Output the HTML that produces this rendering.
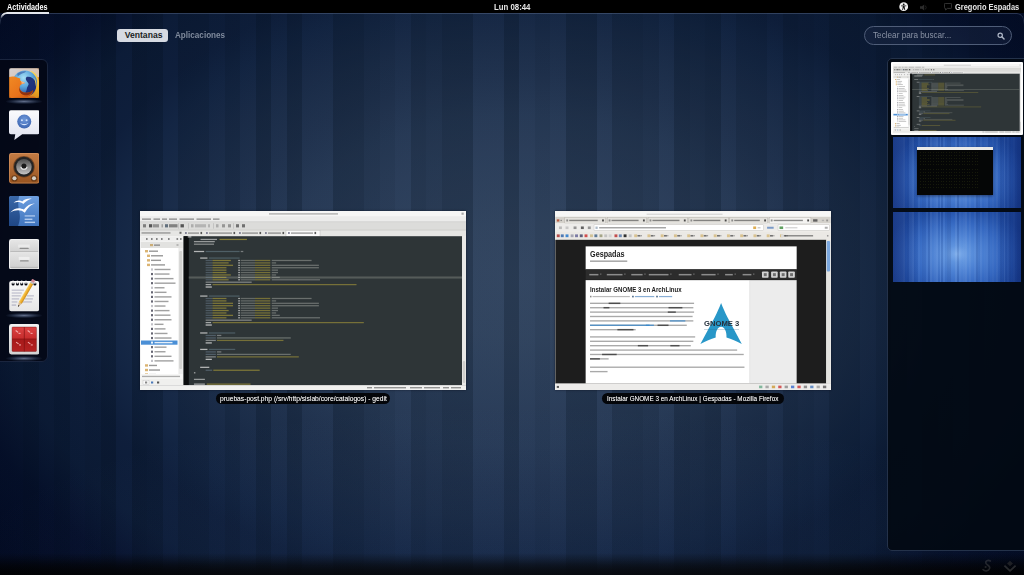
<!DOCTYPE html>
<html>
<head>
<meta charset="utf-8">
<title>GNOME Shell - Actividades</title>
<style>
*{box-sizing:border-box;margin:0;padding:0}
html,body{width:1024px;height:575px;overflow:hidden;background:#14254a;font-family:"Liberation Sans",sans-serif;}
.wt{position:absolute;font-weight:bold;white-space:nowrap;transform-origin:0 50%;}
#root{position:absolute;left:0;top:0;width:1024px;height:575px;overflow:hidden;background:#182a4e;}
.abs{position:absolute}
#bg1{left:0;top:0;width:1024px;height:575px;
 background:radial-gradient(ellipse 600px 414px at 520px 280px, rgb(54.4,73.9,101.7) 0%, rgb(52.0,71.5,99.2) 14%, rgb(46.0,65.5,94.4) 30%, rgb(41.1,60.6,89.5) 40%, rgb(33.9,52.1,81.1) 50%, rgb(29.0,47.3,76.2) 57%, rgb(19.4,37.6,67.8) 69%, rgb(14.5,30.4,59.3) 76%, rgb(12.1,27.9,55.7) 86%, rgb(5.4,15.8,43.6) 96%, rgb(3.0,11.0,37.5) 108%);}
#bg2{left:0;top:0;width:1024px;height:575px;background:linear-gradient(90deg, rgba(0,11,23,0.174) 0.00px, rgba(0,11,23,0.174) 7.75px, rgba(0,11,23,0.174) 7.75px, rgba(0,11,23,0.174) 23.25px, rgba(0,11,23,0.260) 23.25px, rgba(0,11,23,0.260) 38.75px, rgba(0,11,23,0.116) 38.75px, rgba(0,11,23,0.116) 54.25px, rgba(0,11,23,0.219) 54.25px, rgba(0,11,23,0.219) 69.75px, rgba(0,11,23,0.054) 69.75px, rgba(0,11,23,0.054) 85.25px, rgba(0,11,23,0.116) 85.25px, rgba(0,11,23,0.116) 100.75px, rgba(0,11,23,0.260) 100.75px, rgba(0,11,23,0.260) 116.25px, rgba(0,11,23,0.000) 116.25px, rgba(0,11,23,0.000) 131.75px, rgba(0,11,23,0.260) 131.75px, rgba(0,11,23,0.260) 147.25px, rgba(0,11,23,0.219) 147.25px, rgba(0,11,23,0.219) 162.75px, rgba(0,11,23,0.000) 162.75px, rgba(0,11,23,0.000) 178.25px, rgba(0,11,23,0.174) 178.25px, rgba(0,11,23,0.174) 193.75px, rgba(0,11,23,0.174) 193.75px, rgba(0,11,23,0.174) 209.25px, rgba(0,11,23,0.054) 209.25px, rgba(0,11,23,0.054) 224.75px, rgba(0,11,23,0.174) 224.75px, rgba(0,11,23,0.174) 240.25px, rgba(0,11,23,0.054) 240.25px, rgba(0,11,23,0.054) 255.75px, rgba(0,11,23,0.260) 255.75px, rgba(0,11,23,0.260) 271.25px, rgba(0,11,23,0.054) 271.25px, rgba(0,11,23,0.054) 286.75px, rgba(0,11,23,0.260) 286.75px, rgba(0,11,23,0.260) 302.25px, rgba(0,11,23,0.054) 302.25px, rgba(0,11,23,0.054) 317.75px, rgba(0,11,23,0.054) 317.75px, rgba(0,11,23,0.054) 333.25px, rgba(0,11,23,0.260) 333.25px, rgba(0,11,23,0.260) 348.75px, rgba(0,11,23,0.260) 348.75px, rgba(0,11,23,0.260) 364.25px, rgba(0,11,23,0.174) 364.25px, rgba(0,11,23,0.174) 379.75px, rgba(0,11,23,0.116) 379.75px, rgba(0,11,23,0.116) 395.25px, rgba(0,11,23,0.054) 395.25px, rgba(0,11,23,0.054) 410.75px, rgba(0,11,23,0.219) 410.75px, rgba(0,11,23,0.219) 426.25px, rgba(0,11,23,0.174) 426.25px, rgba(0,11,23,0.174) 441.75px, rgba(0,11,23,0.260) 441.75px, rgba(0,11,23,0.260) 457.25px, rgba(0,11,23,0.260) 457.25px, rgba(0,11,23,0.260) 472.75px, rgba(0,11,23,0.054) 472.75px, rgba(0,11,23,0.054) 488.25px, rgba(0,11,23,0.054) 488.25px, rgba(0,11,23,0.054) 503.75px, rgba(0,11,23,0.260) 503.75px, rgba(0,11,23,0.260) 519.25px, rgba(0,11,23,0.054) 519.25px, rgba(0,11,23,0.054) 534.75px, rgba(0,11,23,0.116) 534.75px, rgba(0,11,23,0.116) 550.25px, rgba(0,11,23,0.054) 550.25px, rgba(0,11,23,0.054) 565.75px, rgba(0,11,23,0.260) 565.75px, rgba(0,11,23,0.260) 581.25px, rgba(0,11,23,0.260) 581.25px, rgba(0,11,23,0.260) 596.75px, rgba(0,11,23,0.054) 596.75px, rgba(0,11,23,0.054) 612.25px, rgba(0,11,23,0.219) 612.25px, rgba(0,11,23,0.219) 627.75px, rgba(0,11,23,0.219) 627.75px, rgba(0,11,23,0.219) 643.25px, rgba(0,11,23,0.174) 643.25px, rgba(0,11,23,0.174) 658.75px, rgba(0,11,23,0.054) 658.75px, rgba(0,11,23,0.054) 674.25px, rgba(0,11,23,0.260) 674.25px, rgba(0,11,23,0.260) 689.75px, rgba(0,11,23,0.219) 689.75px, rgba(0,11,23,0.219) 705.25px, rgba(0,11,23,0.260) 705.25px, rgba(0,11,23,0.260) 720.75px, rgba(0,11,23,0.054) 720.75px, rgba(0,11,23,0.054) 736.25px, rgba(0,11,23,0.174) 736.25px, rgba(0,11,23,0.174) 751.75px, rgba(0,11,23,0.174) 751.75px, rgba(0,11,23,0.174) 767.25px, rgba(0,11,23,0.054) 767.25px, rgba(0,11,23,0.054) 782.75px, rgba(0,11,23,0.219) 782.75px, rgba(0,11,23,0.219) 798.25px, rgba(0,11,23,0.174) 798.25px, rgba(0,11,23,0.174) 813.75px, rgba(0,11,23,0.116) 813.75px, rgba(0,11,23,0.116) 829.25px, rgba(0,11,23,0.260) 829.25px, rgba(0,11,23,0.260) 844.75px, rgba(0,11,23,0.260) 844.75px, rgba(0,11,23,0.260) 860.25px, rgba(0,11,23,0.174) 860.25px, rgba(0,11,23,0.174) 875.75px, rgba(0,11,23,0.260) 875.75px, rgba(0,11,23,0.260) 891.25px, rgba(0,11,23,0.174) 891.25px, rgba(0,11,23,0.174) 906.75px, rgba(0,11,23,0.116) 906.75px, rgba(0,11,23,0.116) 922.25px, rgba(0,11,23,0.219) 922.25px, rgba(0,11,23,0.219) 937.75px, rgba(0,11,23,0.174) 937.75px, rgba(0,11,23,0.174) 953.25px, rgba(0,11,23,0.116) 953.25px, rgba(0,11,23,0.116) 968.75px, rgba(0,11,23,0.219) 968.75px, rgba(0,11,23,0.219) 984.25px, rgba(0,11,23,0.174) 984.25px, rgba(0,11,23,0.174) 999.75px, rgba(0,11,23,0.174) 999.75px, rgba(0,11,23,0.174) 1015.25px, rgba(0,11,23,0.174) 1015.25px, rgba(0,11,23,0.174) 1024.00px);}
#bg3{left:0;top:0;width:1024px;height:575px;
 background:radial-gradient(ellipse 560px 170px at 512px 575px, rgba(120,150,215,.062) 0%, rgba(120,150,215,.052) 40%, rgba(120,150,215,.03) 65%, rgba(120,150,215,0) 100%),linear-gradient(180deg, rgba(0,0,0,0) 0px, rgba(0,0,0,0) 553px, rgba(0,0,0,.3) 559px, rgba(0,0,0,.66) 565px, rgba(0,0,0,.86) 570px, rgba(0,0,0,.94) 575px);}
/* top bar */
#topbar{left:0;top:0;width:1024px;height:12.5px;background:#000;color:#e6e6e6;font-weight:bold;font-size:8.2px;line-height:15.6px;}
#topbar span{position:absolute;top:0;white-space:nowrap;transform-origin:0 50%;}
#cornerline{left:0;top:13px;width:1024px;height:12px;border-top:1px solid rgba(120,136,170,.34);border-left:1px solid rgba(150,165,190,.45);border-right:1px solid rgba(150,165,190,.25);border-radius:7px 7px 0 0;border-bottom:none;
 -webkit-mask-image:linear-gradient(180deg,#000 0,#000 3px,transparent 12px);}
/* view selector */
#ventanas{left:117px;top:29px;width:51px;height:13px;border-radius:3px;background:#d6dae2;color:#1a1d24;font-weight:bold;font-size:8.6px;line-height:13.5px;text-align:center;}
#aplic{left:175px;top:29px;height:13px;color:#7f8a9c;font-weight:bold;font-size:8.6px;line-height:13.5px;transform:scaleX(.945);transform-origin:0 50%;white-space:nowrap;}
#search{left:864.4px;top:26.4px;width:148px;height:19px;border-radius:10px;border:1px solid #4f5d78;background:rgba(36,50,80,.32);color:#8a93a5;font-size:9px;line-height:17.5px;padding-left:7.6px;white-space:nowrap;}
#search span{display:inline-block;transform:scaleX(.909);transform-origin:0 50%;}
/* dash */
#dash{left:-2px;top:59.2px;width:50.2px;height:302.6px;border:1px solid #1a253e;border-radius:0 6px 6px 0;background:rgba(3,7,20,.88);}
.ico{position:absolute;left:9px;width:30px;height:30px;border-radius:4px;}
.glow{position:absolute;left:6px;width:36px;height:5px;background:radial-gradient(ellipse at center, rgba(170,190,230,.55) 0%, rgba(120,150,200,.18) 50%, rgba(0,0,0,0) 75%);}
/* windows */
.win{position:absolute;background:#fff;overflow:hidden;box-shadow:0 0 2px rgba(0,4,16,.55);}
.cap{position:absolute;height:11.4px;border-radius:5.7px;background:#04060a;color:#ececec;font-size:7.2px;line-height:11.6px;white-space:nowrap;text-shadow:0 0 .6px rgba(255,255,255,.55);}
.cap span{position:absolute;left:0;top:0;transform-origin:0 50%;}
/* workspaces panel */
#wsp{left:887px;top:58px;width:141px;height:492.5px;border:1px solid #24324a;border-radius:5px 0 0 5px;background:rgba(2,9,18,.89);}
.ws{position:absolute;left:892px;width:132px;overflow:hidden;}
</style>
</head>
<body>
<div id="root">
 <div id="bg1" class="abs"></div>
 <div id="bg2" class="abs"></div>
 <div id="bg3" class="abs"></div>

 <div id="topbar" class="abs">
  <span style="left:6.8px;transform:scaleX(.882);color:#fff">Actividades</span>

  <span style="left:493.9px;transform:scaleX(.953)">Lun 08:44</span>
  <svg class="abs" style="left:898.5px;top:2.2px" width="9.4" height="9.4" viewBox="0 0 10 10"><circle cx="5" cy="5" r="4.7" fill="#f0f0f0"/><circle cx="5" cy="2.5" r="1" fill="#111"/><path d="M2.2,3.8 H7.8 V4.6 H5.9 L6.6,8.4 H5.8 L5,6 L4.2,8.4 H3.4 L4.1,4.6 H2.2Z" fill="#111"/></svg>
  <svg class="abs" style="left:920px;top:3.6px" width="9" height="7" viewBox="0 0 9 7"><path d="M0,2.2 H2 L4.2,0.4 V6.6 L2,4.8 H0Z" fill="#2c2c2c"/><path d="M5.4,1.6 Q7,3.5 5.4,5.4" stroke="#262626" stroke-width=".9" fill="none"/></svg>
  <svg class="abs" style="left:944px;top:3.4px" width="8" height="7.4" viewBox="0 0 8 7.4"><path d="M1.2,.4 H6.8 Q7.6,.4 7.6,1.2 V4.6 Q7.6,5.4 6.8,5.4 H3.4 L1.6,7 V5.4 H1.2 Q.4,5.4 .4,4.6 V1.2 Q.4,.4 1.2,.4Z" fill="none" stroke="#3c3c3c" stroke-width=".9"/></svg>
  <span style="left:955px;transform:scaleX(.910)">Gregorio Espadas</span>
 </div>
 <div id="cornerline" class="abs"></div>
 <div class="abs" style="left:0;top:12px;width:49px;height:8px;border-top:2px solid #e4e7ec;border-left:2px solid #e4e7ec;border-top-left-radius:7px;-webkit-mask-image:linear-gradient(180deg,#000 0,#000 2px,transparent 6.5px);"></div>

 <div id="ventanas" class="abs"><span style="display:inline-block;transform:scaleX(1.003) translateX(.7px)">Ventanas</span></div>
 <div id="aplic" class="abs">Aplicaciones</div>
 <div id="search" class="abs"><span>Teclear para buscar...</span>
  <svg class="abs" style="left:131.8px;top:5px" width="8" height="8" viewBox="0 0 10 10"><circle cx="4" cy="4" r="2.7" fill="none" stroke="#aeb6c6" stroke-width="1.5"/><path d="M6,6 L8.8,8.8" stroke="#aeb6c6" stroke-width="1.8" stroke-linecap="round"/></svg></div>

 <div id="dash" class="abs"></div>
 <svg class="abs" style="left:8.5px;top:67.5px" width="30.5" height="30.5" viewBox="0 0 30 30.00">
<defs>
<linearGradient id="ffbg" x1="0" y1="0" x2="1" y2="1"><stop offset="0" stop-color="#dcd6d2"/><stop offset=".3" stop-color="#e9a05a"/><stop offset=".6" stop-color="#e8801f"/><stop offset="1" stop-color="#d89a2a"/></linearGradient>
<radialGradient id="ffgl" cx=".45" cy=".3" r=".75"><stop offset="0" stop-color="#a6e0f6"/><stop offset=".5" stop-color="#5aa6dc"/><stop offset="1" stop-color="#24479c"/></radialGradient>
<linearGradient id="fftail" x1="0" y1="0" x2="0" y2="1"><stop offset="0" stop-color="#f6d860"/><stop offset=".6" stop-color="#f0b428"/><stop offset="1" stop-color="#d88a1c"/></linearGradient>
<linearGradient id="fffox" x1="0" y1="0" x2="1" y2="1"><stop offset="0" stop-color="#f08a24"/><stop offset=".6" stop-color="#e8711a"/><stop offset="1" stop-color="#b8440e"/></linearGradient>
<clipPath id="ffclip"><rect x="0" y="0" width="30" height="30" rx="2.6"/></clipPath>
</defs>
<g clip-path="url(#ffclip)">
<rect width="30" height="30" fill="url(#ffbg)"/>
<rect x="0" y="0" width="30" height="9" fill="#d4d2d4" opacity=".8"/>
<path d="M21,3 C28,4 31,12 30.5,30 L22,30 C29,22 28,10 21,3Z" fill="url(#fftail)"/>
<circle cx="15.6" cy="14.4" r="12" fill="url(#ffgl)"/>
<path d="M17.6,8.6 C21,8 24.4,10 26,13.4 C27.8,17.6 26.4,23.6 22,26.4 C18,28.6 14.6,26.6 16.4,23.6 C18,21.4 17,19.6 18.6,17.6 C20.4,15.6 18.4,14.4 17.2,12.6 C16.2,11 16.4,9.2 17.6,8.6Z" fill="#1a2a74" opacity=".92"/>
<path d="M8,5.6 C10.4,3.6 14,2.8 17,3.4 C14.6,5.2 11.4,5.6 8.6,8Z" fill="#2b4c9a" opacity=".55"/>
<path d="M24.6,9 C27,12 27.6,16 26.8,19.6 C26,15.6 25.6,12 24.6,9Z" fill="#f4d050" opacity=".9"/>
<path d="M0,8.8 C3,7.8 6.4,8.2 8.6,9.6 L11.2,10.4 C10.6,11.6 11,12.4 12,13 C13.4,13.4 14.8,13.9 15.8,14.8 C14,15.5 12,15.7 11,17.2 C9.6,19.6 11,22.6 14,23.8 C17,24.8 21,24.2 23.8,21.6 C23.4,26 19.6,29 14,29.6 L14,31 L0,31Z" fill="url(#fffox)"/>
<path d="M11,17.2 C9.6,19.6 11,22.6 14,23.8 C17,24.8 21,24.2 23.8,21.6 C22.6,25.8 18.4,27.4 14.6,26.6 C10.6,25.6 8.8,21.4 11,17.2Z" fill="#7e240c" opacity=".8"/>
<path d="M11.4,12.6 C13,13.2 14.8,13.9 15.8,14.8 C14.6,15.2 13.4,15.3 12.4,15.8 C12.6,14.6 12.2,13.6 11.4,12.6Z" fill="#f8c8a0" opacity=".8"/>
<path d="M2,30.5 C6,27.6 10,29 14,29 C20,28.6 25,26.6 28,30.5Z" fill="#c8641a"/>
<rect x="0" y="0" width="30" height="30" rx="2.6" fill="none" stroke="#3a2412" stroke-opacity=".5" stroke-width=".8"/>
</g></svg><svg class="abs" style="left:8.5px;top:110.4px" width="30.5" height="30.5" viewBox="0 0 30 30.00">
<defs><linearGradient id="embg" x1="0" y1="0" x2="0" y2="1"><stop offset="0" stop-color="#fbfbfd"/><stop offset="1" stop-color="#dfe2ef"/></linearGradient>
<radialGradient id="emsm" cx=".5" cy=".35" r=".7"><stop offset="0" stop-color="#6d97da"/><stop offset="1" stop-color="#3a62ae"/></radialGradient></defs>
<path d="M1.8,0.2 H28.2 Q30,0.2 30,2 V22 Q30,23.9 28.2,23.9 H13 L5.2,29.4 L6.2,23.9 H1.8 Q0,23.9 0,22 V2 Q0,0.2 1.8,0.2Z" fill="url(#embg)"/>
<circle cx="15" cy="11.4" r="6.9" fill="url(#emsm)"/>
<circle cx="12.7" cy="10.1" r="1" fill="#cfe0fa"/><circle cx="17.3" cy="10.1" r="1" fill="#cfe0fa"/>
<path d="M10.8,12.6 C12.4,15.8 17.6,15.8 19.2,12.6 C17.6,14.2 12.4,14.2 10.8,12.6Z" fill="#d6e4fb"/>
</svg><svg class="abs" style="left:8.5px;top:153.0px" width="30.5" height="30.5" viewBox="0 0 30 30.00">
<defs><linearGradient id="rbbg" x1="0" y1="0" x2="0" y2="1"><stop offset="0" stop-color="#c47c44"/><stop offset=".5" stop-color="#b06a34"/><stop offset="1" stop-color="#96531f"/></linearGradient>
<linearGradient id="rbcone" x1="0" y1="0" x2="0" y2="1"><stop offset="0" stop-color="#4c4c4c"/><stop offset=".5" stop-color="#8a8a8a"/><stop offset="1" stop-color="#c4c4c4"/></linearGradient><radialGradient id="rbsp" cx=".5" cy=".42" r=".6"><stop offset="0" stop-color="#161616"/><stop offset=".14" stop-color="#222"/><stop offset=".2" stop-color="#d8d8d8"/><stop offset=".45" stop-color="#8e8e8e"/><stop offset=".62" stop-color="#555"/><stop offset=".78" stop-color="#2a2a2a"/><stop offset="1" stop-color="#1a1a1a"/></radialGradient></defs>
<rect width="30" height="30" rx="2.4" fill="url(#rbbg)"/>
<rect x=".5" y=".5" width="29" height="29" rx="2.2" fill="none" stroke="#e0a070" stroke-opacity=".6" stroke-width=".8"/>
<circle cx="14.7" cy="13.5" r="10.6" fill="#3a2010" opacity=".5"/>
<circle cx="14.7" cy="13.5" r="9.8" fill="#242424"/>
<circle cx="14.7" cy="13.5" r="7.6" fill="url(#rbcone)"/>
<circle cx="14.7" cy="12.9" r="2.5" fill="#1a1a1a"/>
<path d="M11.6,13.6 A3.2,3.2 0 0 0 17.8,13.6" fill="none" stroke="#f4f4f4" stroke-width="1.1" opacity=".85"/>
<circle cx="5.4" cy="25" r="3.1" fill="#6a3c18"/><circle cx="5.4" cy="24.8" r="2" fill="#d4cec4"/>
<circle cx="24.6" cy="25" r="3.1" fill="#6a3c18"/><circle cx="24.6" cy="24.8" r="2" fill="#d4cec4"/>
</svg><svg class="abs" style="left:8.5px;top:195.8px" width="30.5" height="30.5" viewBox="0 0 30 30.00">
<defs><linearGradient id="oobg" x1="0" y1="0" x2="0" y2="1"><stop offset="0" stop-color="#6d9fe0"/><stop offset="1" stop-color="#3f74bd"/></linearGradient>
<linearGradient id="oolf" x1="0" y1="0" x2="0" y2="1"><stop offset="0" stop-color="#3a68a8"/><stop offset="1" stop-color="#1f4684"/></linearGradient>
<clipPath id="ooclip"><rect width="30" height="30" rx="2.4"/></clipPath></defs>
<g clip-path="url(#ooclip)">
<rect width="30" height="30" fill="url(#oobg)"/>
<path d="M0,0 H10 C8.6,6 9,11 10,15 C11.4,20 10.6,25 8.8,30 H0Z" fill="url(#oolf)"/>
<path d="M4.6,6.6 C7,4.4 10.4,3.8 13,5.4 C15.6,2.8 19,2.2 22.4,2.6 C19,3.4 16.4,5 14,7.8 C11.6,5.8 8,5.6 4.6,6.6Z" fill="#fdfdff"/>
<path d="M1.2,16.2 C5,11.6 10.4,10.8 14.6,13.4 C17.6,9.2 21.6,7.2 25.4,7.4 C21.2,8.8 18.2,11.8 15.6,16.4 C12,13 6,13.2 1.2,16.2Z" fill="#fdfdff"/>
<rect x="15.4" y="19" width="10.2" height="1.2" fill="#c4d8f4" opacity=".85"/>
<rect x="15.4" y="22.2" width="7.6" height="1.4" fill="#c4d8f4" opacity=".85"/>
<rect x="15.4" y="25.2" width="10.2" height="1.4" fill="#c4d8f4" opacity=".85"/>
</g></svg><svg class="abs" style="left:8.5px;top:238.6px" width="30.5" height="30.5" viewBox="0 0 30 30.00">
<defs><linearGradient id="fmbg" x1="0" y1="0" x2="0" y2="1"><stop offset="0" stop-color="#e6e6e6"/><stop offset=".42" stop-color="#d2d2d2"/><stop offset=".44" stop-color="#e4e4e4"/><stop offset="1" stop-color="#cfcfcf"/></linearGradient></defs>
<rect width="30" height="30" rx="2.4" fill="#f2f2f2"/>
<rect x="1" y="1" width="28" height="28" rx="1.8" fill="url(#fmbg)"/>
<rect x="1.4" y="12.3" width="27.2" height=".8" fill="#a2a2a2"/>
<rect x="1.4" y="13.1" width="27.2" height=".6" fill="#f4f4f4"/>
<rect x="9" y="5.4" width="11.4" height="3" fill="#eaeaea"/>
<rect x="10.4" y="8.6" width="9" height="1.3" rx=".6" fill="#8e8e8e"/>
<rect x="9.6" y="17.6" width="10.6" height="3" fill="#eeeeee"/>
<rect x="10.8" y="20.9" width="8.6" height="1.3" rx=".6" fill="#8e8e8e"/>
<rect x="1.4" y="27.4" width="27.2" height="1.2" fill="#b4b4b4" opacity=".8"/>
</svg><svg class="abs" style="left:8.5px;top:279.0px" width="30.5" height="32.5" viewBox="0 0 30 32.00">
<defs><linearGradient id="gebg" x1="0" y1="0" x2="0" y2="1"><stop offset="0" stop-color="#fafafa"/><stop offset="1" stop-color="#e6e6e6"/></linearGradient>
<linearGradient id="gepen" x1="0" y1="0" x2="1" y2="0"><stop offset="0" stop-color="#f8d060"/><stop offset=".5" stop-color="#f0b030"/><stop offset="1" stop-color="#c88a1a"/></linearGradient></defs>
<rect x="0.2" y="2" width="29.4" height="29.8" rx="2" fill="url(#gebg)"/>
<g fill="#0a0c14"><circle cx="4" cy="4.8" r="1.5"/><circle cx="8.3" cy="4.8" r="1.5"/><circle cx="12.5" cy="4.8" r="1.5"/><circle cx="16.7" cy="4.8" r="1.5"/><circle cx="25.5" cy="4.8" r="1.5"/></g>
<g fill="#fafafa"><rect x="3.3" y="1.6" width="1.4" height="3"/><rect x="7.6" y="1.6" width="1.4" height="3"/><rect x="11.8" y="1.6" width="1.4" height="3"/><rect x="16" y="1.6" width="1.4" height="3"/><rect x="24.8" y="1.6" width="1.4" height="3"/></g>
<g fill="#8c8ca8" opacity=".5"><rect x="2.6" y="10.4" width="12" height="1.2"/><rect x="2.6" y="13.2" width="10" height="1.2"/><rect x="2.6" y="16" width="9" height="1.2"/><rect x="2.6" y="19" width="7.4" height="1.2"/><rect x="2.6" y="22" width="5.6" height="1.2"/><rect x="2.6" y="25" width="4.4" height="1.4"/>
<rect x="17.5" y="16" width="7" height="1.2"/><rect x="15.5" y="19" width="8" height="1.2"/><rect x="13.5" y="22" width="9" height="1.2"/></g>
<g transform="translate(8.8,27.6) rotate(30)">
<path d="M0,0 L-1.7,-4.6 H1.7Z" fill="#d8b890"/><path d="M0,0 L-.7,-1.9 H.7Z" fill="#222"/>
<rect x="-1.7" y="-27" width="3.4" height="22.4" fill="url(#gepen)"/>
<rect x="-1.7" y="-28.4" width="3.4" height="1.6" fill="#b8b8b8"/>
<rect x="-1.7" y="-31.2" width="3.4" height="2.9" rx="1" fill="#d48a98"/>
</g></svg><svg class="abs" style="left:8.5px;top:324.0px" width="30.5" height="30.5" viewBox="0 0 30 30.00">
<defs><linearGradient id="tmfr" x1="0" y1="0" x2="0" y2="1"><stop offset="0" stop-color="#f2f2f2"/><stop offset="1" stop-color="#d2d2d2"/></linearGradient>
<linearGradient id="tmrd" x1="0" y1="0" x2="0" y2="1"><stop offset="0" stop-color="#dc4444"/><stop offset=".48" stop-color="#c62c2c"/><stop offset=".52" stop-color="#a81a1a"/><stop offset="1" stop-color="#b42222"/></linearGradient></defs>
<rect width="30" height="30" rx="2.4" fill="url(#tmfr)"/>
<rect x="3" y="3" width="24" height="24" rx=".8" fill="url(#tmrd)"/>
<rect x="3" y="3" width="24" height="24" rx=".8" fill="none" stroke="#6a0c0c" stroke-opacity=".55" stroke-width=".7"/>
<rect x="14.6" y="3" width=".8" height="24" fill="#7a1010" opacity=".8"/>
<rect x="3" y="14.4" width="24" height=".8" fill="#7a1010" opacity=".8"/>
<g stroke="#ffc8c8" stroke-width="1" fill="none" opacity=".85"><path d="M6.6,6.4 L9,8.2"/><path d="M9.4,9.2 H11.4"/><path d="M18.4,6.4 L20.8,8.2"/><path d="M21.2,9.2 H23.2"/>
<path d="M7,17.8 L9.4,19.6"/><path d="M9.8,20.6 H11.8"/><path d="M18.6,17.8 L21,19.6"/><path d="M21.4,20.6 H23.4"/></g>
</svg><div class="glow" style="top:99.3px"></div><div class="glow" style="top:312.6px"></div><div class="glow" style="top:355.6px"></div>

 <div id="wsp" class="abs"></div>
 <div class="abs" style="left:891px;top:61.6px;width:132.4px;height:73.8px;background:#fdfdfd;border-radius:1px;"></div><div class="abs" style="left:893px;top:63.6px;width:128.4px;height:69.8px;background:#111;overflow:hidden;"><svg class="abs" style="left:0;top:.9px" width="128.4" height="68.9" viewBox="0 0 326 179" preserveAspectRatio="none"><use href="#g1"/></svg></div><div class="abs" style="left:893px;top:137.4px;width:128px;height:71px;background:linear-gradient(90deg, rgba(8,28,100,.42) 0, rgba(8,28,100,0) 20%, rgba(8,28,100,0) 80%, rgba(8,28,100,.42) 100%), linear-gradient(90deg,rgba(255,255,255,0.044) 0.00px, rgba(255,255,255,0.044) 1.94px,rgba(255,255,255,0.044) 1.94px, rgba(255,255,255,0.044) 3.88px,rgba(255,255,255,0.044) 3.88px, rgba(255,255,255,0.044) 5.82px,rgba(255,255,255,0.044) 5.82px, rgba(255,255,255,0.044) 7.76px,rgba(255,255,255,0.044) 7.76px, rgba(255,255,255,0.044) 9.70px,rgba(255,255,255,0.066) 9.70px, rgba(255,255,255,0.066) 11.64px,rgba(255,255,255,0.000) 11.64px, rgba(255,255,255,0.000) 13.58px,rgba(0,10,60,0.050) 13.58px, rgba(0,10,60,0.050) 15.52px,rgba(255,255,255,0.044) 15.52px, rgba(255,255,255,0.044) 17.45px,rgba(255,255,255,0.044) 17.45px, rgba(255,255,255,0.044) 19.39px,rgba(255,255,255,0.066) 19.39px, rgba(255,255,255,0.066) 21.33px,rgba(0,10,60,0.050) 21.33px, rgba(0,10,60,0.050) 23.27px,rgba(0,10,60,0.050) 23.27px, rgba(0,10,60,0.050) 25.21px,rgba(255,255,255,0.044) 25.21px, rgba(255,255,255,0.044) 27.15px,rgba(255,255,255,0.000) 27.15px, rgba(255,255,255,0.000) 29.09px,rgba(0,10,60,0.050) 29.09px, rgba(0,10,60,0.050) 31.03px,rgba(0,10,60,0.050) 31.03px, rgba(0,10,60,0.050) 32.97px,rgba(255,255,255,0.044) 32.97px, rgba(255,255,255,0.044) 34.91px,rgba(0,10,60,0.100) 34.91px, rgba(0,10,60,0.100) 36.85px,rgba(255,255,255,0.066) 36.85px, rgba(255,255,255,0.066) 38.79px,rgba(255,255,255,0.022) 38.79px, rgba(255,255,255,0.022) 40.73px,rgba(255,255,255,0.044) 40.73px, rgba(255,255,255,0.044) 42.67px,rgba(255,255,255,0.066) 42.67px, rgba(255,255,255,0.066) 44.61px,rgba(0,10,60,0.050) 44.61px, rgba(0,10,60,0.050) 46.55px,rgba(255,255,255,0.066) 46.55px, rgba(255,255,255,0.066) 48.48px,rgba(0,10,60,0.100) 48.48px, rgba(0,10,60,0.100) 50.42px,rgba(255,255,255,0.044) 50.42px, rgba(255,255,255,0.044) 52.36px,rgba(0,10,60,0.050) 52.36px, rgba(0,10,60,0.050) 54.30px,rgba(0,10,60,0.100) 54.30px, rgba(0,10,60,0.100) 56.24px,rgba(0,10,60,0.100) 56.24px, rgba(0,10,60,0.100) 58.18px,rgba(255,255,255,0.000) 58.18px, rgba(255,255,255,0.000) 60.12px,rgba(255,255,255,0.000) 60.12px, rgba(255,255,255,0.000) 62.06px,rgba(255,255,255,0.066) 62.06px, rgba(255,255,255,0.066) 64.00px,rgba(0,10,60,0.100) 64.00px, rgba(0,10,60,0.100) 65.94px,rgba(255,255,255,0.044) 65.94px, rgba(255,255,255,0.044) 67.88px,rgba(255,255,255,0.022) 67.88px, rgba(255,255,255,0.022) 69.82px,rgba(255,255,255,0.044) 69.82px, rgba(255,255,255,0.044) 71.76px,rgba(255,255,255,0.066) 71.76px, rgba(255,255,255,0.066) 73.70px,rgba(255,255,255,0.000) 73.70px, rgba(255,255,255,0.000) 75.64px,rgba(255,255,255,0.044) 75.64px, rgba(255,255,255,0.044) 77.58px,rgba(255,255,255,0.000) 77.58px, rgba(255,255,255,0.000) 79.52px,rgba(255,255,255,0.000) 79.52px, rgba(255,255,255,0.000) 81.45px,rgba(255,255,255,0.044) 81.45px, rgba(255,255,255,0.044) 83.39px,rgba(0,10,60,0.100) 83.39px, rgba(0,10,60,0.100) 85.33px,rgba(0,10,60,0.050) 85.33px, rgba(0,10,60,0.050) 87.27px,rgba(255,255,255,0.044) 87.27px, rgba(255,255,255,0.044) 89.21px,rgba(255,255,255,0.000) 89.21px, rgba(255,255,255,0.000) 91.15px,rgba(255,255,255,0.022) 91.15px, rgba(255,255,255,0.022) 93.09px,rgba(255,255,255,0.044) 93.09px, rgba(255,255,255,0.044) 95.03px,rgba(0,10,60,0.050) 95.03px, rgba(0,10,60,0.050) 96.97px,rgba(255,255,255,0.000) 96.97px, rgba(255,255,255,0.000) 98.91px,rgba(255,255,255,0.022) 98.91px, rgba(255,255,255,0.022) 100.85px,rgba(255,255,255,0.000) 100.85px, rgba(255,255,255,0.000) 102.79px,rgba(255,255,255,0.044) 102.79px, rgba(255,255,255,0.044) 104.73px,rgba(255,255,255,0.000) 104.73px, rgba(255,255,255,0.000) 106.67px,rgba(0,10,60,0.100) 106.67px, rgba(0,10,60,0.100) 108.61px,rgba(0,10,60,0.050) 108.61px, rgba(0,10,60,0.050) 110.55px,rgba(255,255,255,0.066) 110.55px, rgba(255,255,255,0.066) 112.48px,rgba(0,10,60,0.050) 112.48px, rgba(0,10,60,0.050) 114.42px,rgba(255,255,255,0.022) 114.42px, rgba(255,255,255,0.022) 116.36px,rgba(0,10,60,0.050) 116.36px, rgba(0,10,60,0.050) 118.30px,rgba(255,255,255,0.000) 118.30px, rgba(255,255,255,0.000) 120.24px,rgba(255,255,255,0.022) 120.24px, rgba(255,255,255,0.022) 122.18px,rgba(0,10,60,0.050) 122.18px, rgba(0,10,60,0.050) 124.12px,rgba(0,10,60,0.100) 124.12px, rgba(0,10,60,0.100) 126.06px,rgba(0,10,60,0.100) 126.06px, rgba(0,10,60,0.100) 128.00px), radial-gradient(ellipse 70px 52px at 64px 42px, #7caceb 0%, #5e93de 16%, #4a7fd2 36%, #3467c0 62%, #2553aa 85%, #1f4a9e 100%);"></div><div class="abs" style="left:917.2px;top:147.2px;width:75.4px;height:47.4px;background:#050606;box-shadow:0 1px 3px rgba(0,0,20,.5)"><div class="abs" style="left:0;top:0;width:75.4px;height:2.6px;background:#e9e9e8"></div><div class="abs" style="left:3px;top:5px;width:58px;height:38px;opacity:.3;background:repeating-linear-gradient(90deg, rgba(5,6,6,0) 0 1px, rgba(5,6,6,1) 1px 2.6px), repeating-linear-gradient(180deg, rgba(110,120,40,.55) 0 .9px, rgba(5,6,6,1) .9px 2.9px);"></div></div><div class="abs" style="left:893px;top:212px;width:128px;height:70px;background:linear-gradient(90deg, rgba(8,28,100,.42) 0, rgba(8,28,100,0) 20%, rgba(8,28,100,0) 80%, rgba(8,28,100,.42) 100%), linear-gradient(90deg,rgba(255,255,255,0.044) 0.00px, rgba(255,255,255,0.044) 1.94px,rgba(255,255,255,0.044) 1.94px, rgba(255,255,255,0.044) 3.88px,rgba(255,255,255,0.044) 3.88px, rgba(255,255,255,0.044) 5.82px,rgba(255,255,255,0.044) 5.82px, rgba(255,255,255,0.044) 7.76px,rgba(255,255,255,0.044) 7.76px, rgba(255,255,255,0.044) 9.70px,rgba(255,255,255,0.066) 9.70px, rgba(255,255,255,0.066) 11.64px,rgba(255,255,255,0.000) 11.64px, rgba(255,255,255,0.000) 13.58px,rgba(0,10,60,0.050) 13.58px, rgba(0,10,60,0.050) 15.52px,rgba(255,255,255,0.044) 15.52px, rgba(255,255,255,0.044) 17.45px,rgba(255,255,255,0.044) 17.45px, rgba(255,255,255,0.044) 19.39px,rgba(255,255,255,0.066) 19.39px, rgba(255,255,255,0.066) 21.33px,rgba(0,10,60,0.050) 21.33px, rgba(0,10,60,0.050) 23.27px,rgba(0,10,60,0.050) 23.27px, rgba(0,10,60,0.050) 25.21px,rgba(255,255,255,0.044) 25.21px, rgba(255,255,255,0.044) 27.15px,rgba(255,255,255,0.000) 27.15px, rgba(255,255,255,0.000) 29.09px,rgba(0,10,60,0.050) 29.09px, rgba(0,10,60,0.050) 31.03px,rgba(0,10,60,0.050) 31.03px, rgba(0,10,60,0.050) 32.97px,rgba(255,255,255,0.044) 32.97px, rgba(255,255,255,0.044) 34.91px,rgba(0,10,60,0.100) 34.91px, rgba(0,10,60,0.100) 36.85px,rgba(255,255,255,0.066) 36.85px, rgba(255,255,255,0.066) 38.79px,rgba(255,255,255,0.022) 38.79px, rgba(255,255,255,0.022) 40.73px,rgba(255,255,255,0.044) 40.73px, rgba(255,255,255,0.044) 42.67px,rgba(255,255,255,0.066) 42.67px, rgba(255,255,255,0.066) 44.61px,rgba(0,10,60,0.050) 44.61px, rgba(0,10,60,0.050) 46.55px,rgba(255,255,255,0.066) 46.55px, rgba(255,255,255,0.066) 48.48px,rgba(0,10,60,0.100) 48.48px, rgba(0,10,60,0.100) 50.42px,rgba(255,255,255,0.044) 50.42px, rgba(255,255,255,0.044) 52.36px,rgba(0,10,60,0.050) 52.36px, rgba(0,10,60,0.050) 54.30px,rgba(0,10,60,0.100) 54.30px, rgba(0,10,60,0.100) 56.24px,rgba(0,10,60,0.100) 56.24px, rgba(0,10,60,0.100) 58.18px,rgba(255,255,255,0.000) 58.18px, rgba(255,255,255,0.000) 60.12px,rgba(255,255,255,0.000) 60.12px, rgba(255,255,255,0.000) 62.06px,rgba(255,255,255,0.066) 62.06px, rgba(255,255,255,0.066) 64.00px,rgba(0,10,60,0.100) 64.00px, rgba(0,10,60,0.100) 65.94px,rgba(255,255,255,0.044) 65.94px, rgba(255,255,255,0.044) 67.88px,rgba(255,255,255,0.022) 67.88px, rgba(255,255,255,0.022) 69.82px,rgba(255,255,255,0.044) 69.82px, rgba(255,255,255,0.044) 71.76px,rgba(255,255,255,0.066) 71.76px, rgba(255,255,255,0.066) 73.70px,rgba(255,255,255,0.000) 73.70px, rgba(255,255,255,0.000) 75.64px,rgba(255,255,255,0.044) 75.64px, rgba(255,255,255,0.044) 77.58px,rgba(255,255,255,0.000) 77.58px, rgba(255,255,255,0.000) 79.52px,rgba(255,255,255,0.000) 79.52px, rgba(255,255,255,0.000) 81.45px,rgba(255,255,255,0.044) 81.45px, rgba(255,255,255,0.044) 83.39px,rgba(0,10,60,0.100) 83.39px, rgba(0,10,60,0.100) 85.33px,rgba(0,10,60,0.050) 85.33px, rgba(0,10,60,0.050) 87.27px,rgba(255,255,255,0.044) 87.27px, rgba(255,255,255,0.044) 89.21px,rgba(255,255,255,0.000) 89.21px, rgba(255,255,255,0.000) 91.15px,rgba(255,255,255,0.022) 91.15px, rgba(255,255,255,0.022) 93.09px,rgba(255,255,255,0.044) 93.09px, rgba(255,255,255,0.044) 95.03px,rgba(0,10,60,0.050) 95.03px, rgba(0,10,60,0.050) 96.97px,rgba(255,255,255,0.000) 96.97px, rgba(255,255,255,0.000) 98.91px,rgba(255,255,255,0.022) 98.91px, rgba(255,255,255,0.022) 100.85px,rgba(255,255,255,0.000) 100.85px, rgba(255,255,255,0.000) 102.79px,rgba(255,255,255,0.044) 102.79px, rgba(255,255,255,0.044) 104.73px,rgba(255,255,255,0.000) 104.73px, rgba(255,255,255,0.000) 106.67px,rgba(0,10,60,0.100) 106.67px, rgba(0,10,60,0.100) 108.61px,rgba(0,10,60,0.050) 108.61px, rgba(0,10,60,0.050) 110.55px,rgba(255,255,255,0.066) 110.55px, rgba(255,255,255,0.066) 112.48px,rgba(0,10,60,0.050) 112.48px, rgba(0,10,60,0.050) 114.42px,rgba(255,255,255,0.022) 114.42px, rgba(255,255,255,0.022) 116.36px,rgba(0,10,60,0.050) 116.36px, rgba(0,10,60,0.050) 118.30px,rgba(255,255,255,0.000) 118.30px, rgba(255,255,255,0.000) 120.24px,rgba(255,255,255,0.022) 120.24px, rgba(255,255,255,0.022) 122.18px,rgba(0,10,60,0.050) 122.18px, rgba(0,10,60,0.050) 124.12px,rgba(0,10,60,0.100) 124.12px, rgba(0,10,60,0.100) 126.06px,rgba(0,10,60,0.100) 126.06px, rgba(0,10,60,0.100) 128.00px), radial-gradient(ellipse 70px 52px at 64px 42px, #7caceb 0%, #5e93de 16%, #4a7fd2 36%, #3467c0 62%, #2553aa 85%, #1f4a9e 100%);"></div>

 <svg class="abs" style="left:981px;top:559px" width="12" height="15" viewBox="0 0 12 15"><path d="M9.4,2 C7,0.6 4,2 5,4.4 C6,6.6 9.6,6.6 8.6,9.6 C7.6,12.4 3.6,12.6 2,10.6" fill="none" stroke="#6a6a6a" stroke-width="1.6" stroke-linecap="round" opacity=".32"/><circle cx="4.6" cy="8" r="1.1" fill="#555" opacity=".4"/></svg>
 <svg class="abs" style="left:1003px;top:560px" width="14" height="14" viewBox="0 0 14 14"><path d="M1.4,5.6 L7,10.8 L12.6,5.6" fill="none" stroke="#6e6e6e" stroke-width="1.8" stroke-linejoin="round" opacity=".36"/><path d="M4,3.4 L7,6.2 L10,3.4 L7,.8Z" fill="#3a3a3a" opacity=".5"/></svg>
 <div class="win" id="w1" style="left:140px;top:211px;width:326px;height:179px;"><svg width="326" height="179" viewBox="0 0 326 179" style="display:block"><g id="g1"><rect x="0" y="0" width="326" height="179" fill="#f1f1f0"/><rect x="0" y="0" width="326" height="5.4" fill="#f6f6f5"/><rect x="129" y="2.2" width="69" height="1.4" fill="#777" opacity=".55"/><rect x="321.5" y="1.6" width="2.2" height="2.2" fill="#777" opacity=".6"/><rect x="0" y="5.4" width="326" height="5.4" fill="#ececeb"/><rect x="2.0" y="7.4" width="9.0" height="1.5" fill="#444" opacity=".5"/><rect x="13.5" y="7.4" width="6.5" height="1.5" fill="#444" opacity=".5"/><rect x="22.0" y="7.4" width="5.0" height="1.5" fill="#444" opacity=".5"/><rect x="29.0" y="7.4" width="8.0" height="1.5" fill="#444" opacity=".5"/><rect x="39.5" y="7.4" width="14.5" height="1.5" fill="#444" opacity=".5"/><rect x="56.5" y="7.4" width="14.5" height="1.5" fill="#444" opacity=".5"/><rect x="73.0" y="7.4" width="6.5" height="1.5" fill="#444" opacity=".5"/><rect x="0" y="10.8" width="326" height="8.2" fill="#dcdcda"/><rect x="0" y="10.6" width="326" height=".5" fill="#c4c4c2"/><rect x="3.0" y="13.2" width="3.0" height="3.2" fill="#555" opacity="0.70"/><rect x="9.0" y="13.2" width="3.2" height="3.2" fill="#333" opacity="0.80"/><rect x="13.0" y="13.2" width="6.0" height="3.2" fill="#555" opacity="0.55"/><rect x="21.5" y="13.2" width="1.5" height="3.2" fill="#666" opacity="0.50"/><rect x="25.0" y="13.2" width="3.0" height="3.2" fill="#456" opacity="0.80"/><rect x="29.0" y="13.2" width="8.5" height="3.2" fill="#444" opacity="0.60"/><rect x="40.5" y="13.2" width="3.4" height="3.2" fill="#333" opacity="0.80"/><rect x="51.0" y="13.2" width="2.5" height="3.2" fill="#999" opacity="0.70"/><rect x="55.0" y="13.2" width="11.0" height="3.2" fill="#999" opacity="0.60"/><rect x="68.0" y="13.2" width="2.0" height="3.2" fill="#999" opacity="0.60"/><rect x="76.0" y="13.2" width="2.5" height="3.2" fill="#999" opacity="0.70"/><rect x="82.0" y="13.2" width="3.0" height="3.2" fill="#777" opacity="0.70"/><rect x="88.0" y="13.2" width="3.0" height="3.2" fill="#777" opacity="0.70"/><rect x="96.0" y="13.2" width="3.0" height="3.2" fill="#555" opacity="0.80"/><rect x="102.0" y="13.2" width="3.0" height="3.2" fill="#555" opacity="0.80"/><rect x="38.0" y="12.2" width=".5" height="5.4" fill="#aaa"/><rect x="48.0" y="12.2" width=".5" height="5.4" fill="#aaa"/><rect x="73.0" y="12.2" width=".5" height="5.4" fill="#aaa"/><rect x="93.0" y="12.2" width=".5" height="5.4" fill="#aaa"/><rect x="0" y="19" width="326" height="6.2" fill="#e6e6e4"/><rect x="0" y="18.8" width="326" height=".5" fill="#bdbdbb"/><rect x="1.5" y="21.2" width="29" height="1.5" fill="#555" opacity=".5"/><rect x="39.5" y="20.8" width="2" height="2" fill="#333" opacity=".7"/><rect x="48.0" y="21.4" width="11.0" height="1.4" fill="#444" opacity=".5"/><rect x="60.5" y="20.9" width="1.6" height="2.2" fill="#222" opacity=".75"/><rect x="45.0" y="21" width="1.8" height="2" fill="#446" opacity=".6"/><rect x="69.0" y="21.4" width="23.0" height="1.4" fill="#444" opacity=".5"/><rect x="93.5" y="20.9" width="1.6" height="2.2" fill="#222" opacity=".75"/><rect x="66.0" y="21" width="1.8" height="2" fill="#446" opacity=".6"/><rect x="102.0" y="21.4" width="16.0" height="1.4" fill="#444" opacity=".5"/><rect x="119.5" y="20.9" width="1.6" height="2.2" fill="#222" opacity=".75"/><rect x="99.0" y="21" width="1.8" height="2" fill="#446" opacity=".6"/><rect x="128.0" y="21.4" width="13.0" height="1.4" fill="#444" opacity=".5"/><rect x="142.5" y="20.9" width="1.6" height="2.2" fill="#222" opacity=".75"/><rect x="125.0" y="21" width="1.8" height="2" fill="#446" opacity=".6"/><rect x="146.0" y="19.3" width="34.0" height="6" fill="#fafafa" stroke="#b0b0ae" stroke-width=".4"/><rect x="151.0" y="21.4" width="22.0" height="1.4" fill="#444" opacity=".5"/><rect x="174.5" y="20.9" width="1.6" height="2.2" fill="#222" opacity=".75"/><rect x="148.0" y="21" width="1.8" height="2" fill="#446" opacity=".6"/><rect x="0.8" y="25.2" width="37.8" height="149" fill="#ffffff"/><rect x="0.8" y="25.2" width="42" height="5.6" fill="#efefee"/><rect x="6.0" y="27.2" width="1.6" height="1.6" fill="#333" opacity=".7"/><rect x="11.0" y="27.2" width="1.6" height="1.6" fill="#333" opacity=".7"/><rect x="16.0" y="27.2" width="1.6" height="1.6" fill="#333" opacity=".7"/><rect x="21.0" y="27.2" width="1.6" height="1.6" fill="#333" opacity=".7"/><rect x="28.0" y="27.2" width="1.6" height="1.6" fill="#333" opacity=".7"/><rect x="36.5" y="27.2" width="1.6" height="1.6" fill="#333" opacity=".7"/><rect x="40.0" y="27.2" width="1.6" height="1.6" fill="#333" opacity=".7"/><rect x="0.8" y="31" width="42" height="6" fill="#e2e2e0"/><rect x="10" y="33" width="3" height="2.2" fill="#c9a76a" opacity=".9"/><rect x="14" y="33.4" width="6" height="1.5" fill="#555" opacity=".55"/><rect x="36.5" y="33.2" width="2" height="1.6" fill="#777" opacity=".5"/><rect x="5.0" y="39.00" width="3" height="2.4" fill="#d9b06a" opacity=".95"/><rect x="9.0" y="39.50" width="9.0" height="1.4" fill="#444" opacity=".55"/><rect x="7.0" y="43.57" width="3" height="2.4" fill="#d9b06a" opacity=".95"/><rect x="11.0" y="44.07" width="12.0" height="1.4" fill="#444" opacity=".55"/><rect x="7.0" y="48.14" width="3" height="2.4" fill="#d9b06a" opacity=".95"/><rect x="11.0" y="48.64" width="10.0" height="1.4" fill="#444" opacity=".55"/><rect x="7.0" y="52.71" width="3" height="2.4" fill="#d9b06a" opacity=".95"/><rect x="11.0" y="53.21" width="14.0" height="1.4" fill="#444" opacity=".55"/><rect x="11" y="57.38" width="2" height="2.2" fill="#334" opacity="0.30"/><rect x="14.5" y="57.78" width="16.0" height="1.4" fill="#444" opacity=".5"/><rect x="11" y="61.95" width="2" height="2.2" fill="#334" opacity="0.75"/><rect x="14.5" y="62.35" width="15.0" height="1.4" fill="#444" opacity=".5"/><rect x="11" y="66.52" width="2" height="2.2" fill="#334" opacity="0.75"/><rect x="14.5" y="66.92" width="19.0" height="1.4" fill="#444" opacity=".5"/><rect x="11" y="71.09" width="2" height="2.2" fill="#334" opacity="0.75"/><rect x="14.5" y="71.49" width="21.0" height="1.4" fill="#444" opacity=".5"/><rect x="11" y="75.66" width="2" height="2.2" fill="#334" opacity="0.30"/><rect x="14.5" y="76.06" width="10.0" height="1.4" fill="#444" opacity=".5"/><rect x="11" y="80.23" width="2" height="2.2" fill="#334" opacity="0.75"/><rect x="14.5" y="80.63" width="12.0" height="1.4" fill="#444" opacity=".5"/><rect x="11" y="84.80" width="2" height="2.2" fill="#334" opacity="0.75"/><rect x="14.5" y="85.20" width="17.0" height="1.4" fill="#444" opacity=".5"/><rect x="11" y="89.37" width="2" height="2.2" fill="#334" opacity="0.75"/><rect x="14.5" y="89.77" width="14.0" height="1.4" fill="#444" opacity=".5"/><rect x="11" y="93.94" width="2" height="2.2" fill="#334" opacity="0.30"/><rect x="14.5" y="94.34" width="11.0" height="1.4" fill="#444" opacity=".5"/><rect x="11" y="98.51" width="2" height="2.2" fill="#334" opacity="0.75"/><rect x="14.5" y="98.91" width="15.0" height="1.4" fill="#444" opacity=".5"/><rect x="11" y="103.08" width="2" height="2.2" fill="#334" opacity="0.75"/><rect x="14.5" y="103.48" width="16.0" height="1.4" fill="#444" opacity=".5"/><rect x="11" y="107.65" width="2" height="2.2" fill="#334" opacity="0.75"/><rect x="14.5" y="108.05" width="17.0" height="1.4" fill="#444" opacity=".5"/><rect x="11" y="112.22" width="2" height="2.2" fill="#334" opacity="0.30"/><rect x="14.5" y="112.62" width="9.0" height="1.4" fill="#444" opacity=".5"/><rect x="11" y="116.79" width="2" height="2.2" fill="#334" opacity="0.75"/><rect x="14.5" y="117.19" width="11.0" height="1.4" fill="#444" opacity=".5"/><rect x="11" y="121.36" width="2" height="2.2" fill="#334" opacity="0.75"/><rect x="14.5" y="121.76" width="13.0" height="1.4" fill="#444" opacity=".5"/><rect x="11" y="125.93" width="2" height="2.2" fill="#334" opacity="0.75"/><rect x="14.5" y="126.33" width="17.0" height="1.4" fill="#444" opacity=".5"/><rect x="1" y="129.50" width="36.5" height="4.2" fill="#4a8fd6"/><rect x="11" y="130.60" width="2" height="2" fill="#fff" opacity=".9"/><rect x="14.5" y="130.90" width="18.0" height="1.4" fill="#fff" opacity=".85"/><rect x="11" y="135.07" width="2" height="2.2" fill="#334" opacity="0.75"/><rect x="14.5" y="135.47" width="12.0" height="1.4" fill="#444" opacity=".5"/><rect x="11" y="139.64" width="2" height="2.2" fill="#334" opacity="0.75"/><rect x="14.5" y="140.04" width="11.0" height="1.4" fill="#444" opacity=".5"/><rect x="11" y="144.21" width="2" height="2.2" fill="#334" opacity="0.75"/><rect x="14.5" y="144.61" width="17.0" height="1.4" fill="#444" opacity=".5"/><rect x="11" y="148.78" width="2" height="2.2" fill="#334" opacity="0.30"/><rect x="14.5" y="149.18" width="19.0" height="1.4" fill="#444" opacity=".5"/><rect x="5.0" y="153.25" width="3" height="2.4" fill="#d9b06a" opacity=".95"/><rect x="9.0" y="153.75" width="8.0" height="1.4" fill="#444" opacity=".55"/><rect x="5.0" y="157.82" width="3" height="2.4" fill="#d9b06a" opacity=".95"/><rect x="9.0" y="158.32" width="11.0" height="1.4" fill="#444" opacity=".55"/><rect x="5.0" y="162.39" width="3" height="2.4" fill="#d9b06a" opacity=".95"/><rect x="9.0" y="162.89" width="7.0" height="1.4" fill="#444" opacity=".55"/><rect x="38.6" y="37" width="4.2" height="126" fill="#ececeb"/><rect x="39.3" y="40" width="2.8" height="118" fill="#d2d2d0" rx="1"/><rect x="0.8" y="163" width="42" height="5" fill="#f6f6f5"/><rect x="2" y="164.8" width="38" height="1.3" fill="#555" opacity=".45"/><rect x="0.8" y="168" width="42" height="6.3" fill="#f0f0ee"/><rect x="3" y="169.2" width="6" height="4.4" fill="#fafafa" stroke="#aaa" stroke-width=".3"/><rect x="5" y="170.5" width="2.2" height="2" fill="#888"/><rect x="11" y="170.5" width="2.2" height="2" fill="#4a78b8"/><rect x="17" y="170.5" width="2.2" height="2" fill="#555"/><rect x="43.6" y="25.2" width="278.5" height="149" fill="#2e3537"/><rect x="43.6" y="25.2" width="5.2" height="149" fill="#0b0d0e"/><rect x="48.8" y="65.46" width="273.3" height="2.1" fill="#555b59"/><rect x="47.73" y="25.26" width="3.65" height="1.25" fill="#eeeeec" opacity="0.70"/><rect x="60.52" y="27.82" width="16.44" height="1.25" fill="#eeeeec" opacity="0.58"/><rect x="79.51" y="27.82" width="27.40" height="1.25" fill="#e8cf3a" opacity="0.47"/><rect x="53.94" y="30.01" width="20.83" height="1.25" fill="#eeeeec" opacity="0.55"/><rect x="53.94" y="32.57" width="20.09" height="1.25" fill="#eeeeec" opacity="0.47"/><rect x="53.94" y="39.88" width="10.23" height="1.25" fill="#eeeeec" opacity="0.70"/><rect x="65.63" y="39.88" width="33.98" height="1.25" fill="#6f8794" opacity="0.51"/><rect x="100.71" y="39.88" width="2.56" height="1.25" fill="#eeeeec" opacity="0.39"/><rect x="60.15" y="46.45" width="7.31" height="1.25" fill="#eeeeec" opacity="0.70"/><rect x="68.92" y="46.45" width="30.69" height="1.25" fill="#6f8794" opacity="0.47"/><rect x="65.63" y="48.86" width="6.94" height="1.25" fill="#7d93a8" opacity="0.39"/><rect x="72.57" y="48.86" width="18.27" height="1.25" fill="#e8cf3a" opacity="0.43"/><rect x="98.15" y="48.86" width="1.83" height="1.25" fill="#eeeeec" opacity="0.62"/><rect x="100.71" y="48.86" width="14.25" height="1.25" fill="#c8ccc4" opacity="0.35"/><rect x="114.95" y="48.86" width="15.35" height="1.25" fill="#e8cf3a" opacity="0.39"/><rect x="131.76" y="48.86" width="39.82" height="1.25" fill="#c8ccc4" opacity="0.39"/><rect x="65.63" y="51.28" width="6.94" height="1.25" fill="#7d93a8" opacity="0.39"/><rect x="72.57" y="51.28" width="16.08" height="1.25" fill="#e8cf3a" opacity="0.43"/><rect x="98.15" y="51.28" width="1.83" height="1.25" fill="#eeeeec" opacity="0.62"/><rect x="100.71" y="51.28" width="14.25" height="1.25" fill="#c8ccc4" opacity="0.35"/><rect x="114.95" y="51.28" width="15.35" height="1.25" fill="#e8cf3a" opacity="0.39"/><rect x="131.76" y="51.28" width="4.38" height="1.25" fill="#c8ccc4" opacity="0.39"/><rect x="65.63" y="53.69" width="6.94" height="1.25" fill="#7d93a8" opacity="0.39"/><rect x="72.57" y="53.69" width="20.46" height="1.25" fill="#e8cf3a" opacity="0.43"/><rect x="98.15" y="53.69" width="1.83" height="1.25" fill="#eeeeec" opacity="0.62"/><rect x="100.71" y="53.69" width="14.25" height="1.25" fill="#c8ccc4" opacity="0.35"/><rect x="114.95" y="53.69" width="15.35" height="1.25" fill="#e8cf3a" opacity="0.39"/><rect x="131.76" y="53.69" width="47.13" height="1.25" fill="#c8ccc4" opacity="0.39"/><rect x="65.63" y="56.10" width="6.94" height="1.25" fill="#7d93a8" opacity="0.39"/><rect x="72.57" y="56.10" width="13.88" height="1.25" fill="#e8cf3a" opacity="0.43"/><rect x="98.15" y="56.10" width="1.83" height="1.25" fill="#eeeeec" opacity="0.62"/><rect x="100.71" y="56.10" width="14.25" height="1.25" fill="#c8ccc4" opacity="0.35"/><rect x="114.95" y="56.10" width="15.35" height="1.25" fill="#e8cf3a" opacity="0.39"/><rect x="131.76" y="56.10" width="47.13" height="1.25" fill="#c8ccc4" opacity="0.39"/><rect x="65.63" y="58.51" width="6.94" height="1.25" fill="#7d93a8" opacity="0.39"/><rect x="72.57" y="58.51" width="13.88" height="1.25" fill="#e8cf3a" opacity="0.43"/><rect x="98.15" y="58.51" width="1.83" height="1.25" fill="#eeeeec" opacity="0.62"/><rect x="100.71" y="58.51" width="14.25" height="1.25" fill="#c8ccc4" opacity="0.35"/><rect x="114.95" y="58.51" width="15.35" height="1.25" fill="#e8cf3a" opacity="0.39"/><rect x="131.76" y="58.51" width="6.21" height="1.25" fill="#c8ccc4" opacity="0.39"/><rect x="65.63" y="60.92" width="6.94" height="1.25" fill="#7d93a8" opacity="0.39"/><rect x="72.57" y="60.92" width="13.88" height="1.25" fill="#e8cf3a" opacity="0.43"/><rect x="98.15" y="60.92" width="1.83" height="1.25" fill="#eeeeec" opacity="0.62"/><rect x="100.71" y="60.92" width="14.25" height="1.25" fill="#c8ccc4" opacity="0.35"/><rect x="114.95" y="60.92" width="15.35" height="1.25" fill="#e8cf3a" opacity="0.39"/><rect x="131.76" y="60.92" width="6.21" height="1.25" fill="#c8ccc4" opacity="0.39"/><rect x="65.63" y="63.33" width="6.94" height="1.25" fill="#7d93a8" opacity="0.39"/><rect x="72.57" y="63.33" width="18.27" height="1.25" fill="#e8cf3a" opacity="0.43"/><rect x="98.15" y="63.33" width="1.83" height="1.25" fill="#eeeeec" opacity="0.62"/><rect x="100.71" y="63.33" width="14.25" height="1.25" fill="#c8ccc4" opacity="0.35"/><rect x="114.95" y="63.33" width="15.35" height="1.25" fill="#e8cf3a" opacity="0.39"/><rect x="131.76" y="63.33" width="4.38" height="1.25" fill="#c8ccc4" opacity="0.39"/><rect x="65.63" y="65.74" width="6.94" height="1.25" fill="#7d93a8" opacity="0.39"/><rect x="72.57" y="65.74" width="13.88" height="1.25" fill="#e8cf3a" opacity="0.43"/><rect x="98.15" y="65.74" width="1.83" height="1.25" fill="#eeeeec" opacity="0.62"/><rect x="100.71" y="65.74" width="14.25" height="1.25" fill="#c8ccc4" opacity="0.35"/><rect x="114.95" y="65.74" width="15.35" height="1.25" fill="#e8cf3a" opacity="0.39"/><rect x="131.76" y="65.74" width="8.04" height="1.25" fill="#c8ccc4" opacity="0.39"/><rect x="65.63" y="68.16" width="6.94" height="1.25" fill="#7d93a8" opacity="0.39"/><rect x="72.57" y="68.16" width="16.08" height="1.25" fill="#e8cf3a" opacity="0.43"/><rect x="98.15" y="68.16" width="1.83" height="1.25" fill="#eeeeec" opacity="0.62"/><rect x="100.71" y="68.16" width="14.25" height="1.25" fill="#c8ccc4" opacity="0.35"/><rect x="114.95" y="68.16" width="15.35" height="1.25" fill="#e8cf3a" opacity="0.39"/><rect x="131.76" y="68.16" width="48.23" height="1.25" fill="#c8ccc4" opacity="0.39"/><rect x="65.63" y="70.57" width="46.04" height="1.25" fill="#eeeeec" opacity="0.43"/><rect x="65.63" y="72.98" width="4.75" height="1.25" fill="#eeeeec" opacity="0.00"/><rect x="65.63" y="72.98" width="5.48" height="1.25" fill="#eeeeec" opacity="0.62"/><rect x="72.57" y="72.98" width="143.95" height="1.25" fill="#e8cf3a" opacity="0.39"/><rect x="65.63" y="75.39" width="6.21" height="1.25" fill="#eeeeec" opacity="0.74"/><rect x="60.15" y="84.45" width="7.31" height="1.25" fill="#eeeeec" opacity="0.70"/><rect x="68.92" y="84.45" width="30.69" height="1.25" fill="#6f8794" opacity="0.47"/><rect x="65.63" y="86.86" width="6.94" height="1.25" fill="#7d93a8" opacity="0.39"/><rect x="72.57" y="86.86" width="13.88" height="1.25" fill="#e8cf3a" opacity="0.43"/><rect x="98.15" y="86.86" width="1.83" height="1.25" fill="#eeeeec" opacity="0.62"/><rect x="100.71" y="86.86" width="14.25" height="1.25" fill="#c8ccc4" opacity="0.35"/><rect x="114.95" y="86.86" width="15.35" height="1.25" fill="#e8cf3a" opacity="0.39"/><rect x="131.76" y="86.86" width="39.82" height="1.25" fill="#c8ccc4" opacity="0.39"/><rect x="65.63" y="89.27" width="6.94" height="1.25" fill="#7d93a8" opacity="0.39"/><rect x="72.57" y="89.27" width="13.88" height="1.25" fill="#e8cf3a" opacity="0.43"/><rect x="98.15" y="89.27" width="1.83" height="1.25" fill="#eeeeec" opacity="0.62"/><rect x="100.71" y="89.27" width="14.25" height="1.25" fill="#c8ccc4" opacity="0.35"/><rect x="114.95" y="89.27" width="15.35" height="1.25" fill="#e8cf3a" opacity="0.39"/><rect x="131.76" y="89.27" width="4.38" height="1.25" fill="#c8ccc4" opacity="0.39"/><rect x="65.63" y="91.68" width="6.94" height="1.25" fill="#7d93a8" opacity="0.39"/><rect x="72.57" y="91.68" width="20.46" height="1.25" fill="#e8cf3a" opacity="0.43"/><rect x="98.15" y="91.68" width="1.83" height="1.25" fill="#eeeeec" opacity="0.62"/><rect x="100.71" y="91.68" width="14.25" height="1.25" fill="#c8ccc4" opacity="0.35"/><rect x="114.95" y="91.68" width="15.35" height="1.25" fill="#e8cf3a" opacity="0.39"/><rect x="131.76" y="91.68" width="47.13" height="1.25" fill="#c8ccc4" opacity="0.39"/><rect x="65.63" y="94.10" width="6.94" height="1.25" fill="#7d93a8" opacity="0.39"/><rect x="72.57" y="94.10" width="20.46" height="1.25" fill="#e8cf3a" opacity="0.43"/><rect x="98.15" y="94.10" width="1.83" height="1.25" fill="#eeeeec" opacity="0.62"/><rect x="100.71" y="94.10" width="14.25" height="1.25" fill="#c8ccc4" opacity="0.35"/><rect x="114.95" y="94.10" width="15.35" height="1.25" fill="#e8cf3a" opacity="0.39"/><rect x="131.76" y="94.10" width="47.13" height="1.25" fill="#c8ccc4" opacity="0.39"/><rect x="65.63" y="96.51" width="6.94" height="1.25" fill="#7d93a8" opacity="0.39"/><rect x="72.57" y="96.51" width="13.88" height="1.25" fill="#e8cf3a" opacity="0.43"/><rect x="98.15" y="96.51" width="1.83" height="1.25" fill="#eeeeec" opacity="0.62"/><rect x="100.71" y="96.51" width="14.25" height="1.25" fill="#c8ccc4" opacity="0.35"/><rect x="114.95" y="96.51" width="15.35" height="1.25" fill="#e8cf3a" opacity="0.39"/><rect x="131.76" y="96.51" width="6.21" height="1.25" fill="#c8ccc4" opacity="0.39"/><rect x="65.63" y="98.92" width="6.94" height="1.25" fill="#7d93a8" opacity="0.39"/><rect x="72.57" y="98.92" width="16.08" height="1.25" fill="#e8cf3a" opacity="0.43"/><rect x="98.15" y="98.92" width="1.83" height="1.25" fill="#eeeeec" opacity="0.62"/><rect x="100.71" y="98.92" width="14.25" height="1.25" fill="#c8ccc4" opacity="0.35"/><rect x="114.95" y="98.92" width="15.35" height="1.25" fill="#e8cf3a" opacity="0.39"/><rect x="131.76" y="98.92" width="6.21" height="1.25" fill="#c8ccc4" opacity="0.39"/><rect x="65.63" y="101.33" width="6.94" height="1.25" fill="#7d93a8" opacity="0.39"/><rect x="72.57" y="101.33" width="13.88" height="1.25" fill="#e8cf3a" opacity="0.43"/><rect x="98.15" y="101.33" width="1.83" height="1.25" fill="#eeeeec" opacity="0.62"/><rect x="100.71" y="101.33" width="14.25" height="1.25" fill="#c8ccc4" opacity="0.35"/><rect x="114.95" y="101.33" width="15.35" height="1.25" fill="#e8cf3a" opacity="0.39"/><rect x="131.76" y="101.33" width="4.38" height="1.25" fill="#c8ccc4" opacity="0.39"/><rect x="65.63" y="103.74" width="6.94" height="1.25" fill="#7d93a8" opacity="0.39"/><rect x="72.57" y="103.74" width="20.46" height="1.25" fill="#e8cf3a" opacity="0.43"/><rect x="98.15" y="103.74" width="1.83" height="1.25" fill="#eeeeec" opacity="0.62"/><rect x="100.71" y="103.74" width="14.25" height="1.25" fill="#c8ccc4" opacity="0.35"/><rect x="114.95" y="103.74" width="15.35" height="1.25" fill="#e8cf3a" opacity="0.39"/><rect x="131.76" y="103.74" width="8.04" height="1.25" fill="#c8ccc4" opacity="0.39"/><rect x="65.63" y="106.15" width="6.94" height="1.25" fill="#7d93a8" opacity="0.39"/><rect x="72.57" y="106.15" width="13.88" height="1.25" fill="#e8cf3a" opacity="0.43"/><rect x="98.15" y="106.15" width="1.83" height="1.25" fill="#eeeeec" opacity="0.62"/><rect x="100.71" y="106.15" width="14.25" height="1.25" fill="#c8ccc4" opacity="0.35"/><rect x="114.95" y="106.15" width="15.35" height="1.25" fill="#e8cf3a" opacity="0.39"/><rect x="131.76" y="106.15" width="48.23" height="1.25" fill="#c8ccc4" opacity="0.39"/><rect x="65.63" y="108.56" width="46.04" height="1.25" fill="#eeeeec" opacity="0.43"/><rect x="65.63" y="110.98" width="5.48" height="1.25" fill="#eeeeec" opacity="0.62"/><rect x="72.57" y="110.98" width="151.26" height="1.25" fill="#e8cf3a" opacity="0.39"/><rect x="65.63" y="113.39" width="6.21" height="1.25" fill="#eeeeec" opacity="0.74"/><rect x="60.15" y="121.35" width="7.31" height="1.25" fill="#eeeeec" opacity="0.70"/><rect x="68.92" y="121.35" width="26.31" height="1.25" fill="#6f8794" opacity="0.47"/><rect x="65.63" y="123.84" width="10.23" height="1.25" fill="#7d93a8" opacity="0.43"/><rect x="76.96" y="123.84" width="4.38" height="1.25" fill="#eeeeec" opacity="0.39"/><rect x="65.63" y="126.32" width="10.23" height="1.25" fill="#7d93a8" opacity="0.43"/><rect x="76.96" y="126.32" width="73.80" height="1.25" fill="#c8ccc4" opacity="0.39"/><rect x="65.63" y="128.81" width="10.23" height="1.25" fill="#eeeeec" opacity="0.43"/><rect x="76.96" y="128.81" width="66.50" height="1.25" fill="#e8cf3a" opacity="0.39"/><rect x="65.63" y="131.29" width="6.21" height="1.25" fill="#eeeeec" opacity="0.74"/><rect x="60.15" y="137.79" width="7.31" height="1.25" fill="#eeeeec" opacity="0.70"/><rect x="68.92" y="137.79" width="26.31" height="1.25" fill="#6f8794" opacity="0.47"/><rect x="65.63" y="140.28" width="10.23" height="1.25" fill="#7d93a8" opacity="0.43"/><rect x="76.96" y="140.28" width="4.38" height="1.25" fill="#eeeeec" opacity="0.39"/><rect x="65.63" y="142.76" width="10.23" height="1.25" fill="#7d93a8" opacity="0.43"/><rect x="76.96" y="142.76" width="73.80" height="1.25" fill="#c8ccc4" opacity="0.39"/><rect x="65.63" y="145.25" width="10.23" height="1.25" fill="#eeeeec" opacity="0.43"/><rect x="76.96" y="145.25" width="81.84" height="1.25" fill="#e8cf3a" opacity="0.39"/><rect x="65.63" y="147.73" width="6.21" height="1.25" fill="#eeeeec" opacity="0.74"/><rect x="60.15" y="155.70" width="9.13" height="1.25" fill="#eeeeec" opacity="0.70"/><rect x="65.63" y="158.62" width="6.58" height="1.25" fill="#7d93a8" opacity="0.43"/><rect x="73.30" y="158.62" width="46.40" height="1.25" fill="#e8cf3a" opacity="0.43"/><rect x="53.94" y="161.18" width="1.46" height="1.25" fill="#eeeeec" opacity="0.62"/><rect x="53.94" y="167.75" width="10.96" height="1.25" fill="#eeeeec" opacity="0.55"/><rect x="53.94" y="172.50" width="10.96" height="1.25" fill="#eeeeec" opacity="0.62"/><rect x="66.73" y="172.50" width="43.84" height="1.25" fill="#e8cf3a" opacity="0.43"/><rect x="322.1" y="25.2" width="3.9" height="149" fill="#e9e9e7"/><rect x="322.8" y="150" width="2.4" height="22" fill="#cfcfcd" rx="1"/><rect x="0" y="174.2" width="326" height="4.8" fill="#f1f1ef"/><rect x="0" y="174" width="326" height=".4" fill="#bbb"/><rect x="227.0" y="176" width="5.0" height="1.4" fill="#444" opacity=".55"/><rect x="234.0" y="176" width="32.0" height="1.4" fill="#444" opacity=".55"/><rect x="270.0" y="176" width="12.0" height="1.4" fill="#444" opacity=".55"/><rect x="284.0" y="176" width="16.0" height="1.4" fill="#444" opacity=".55"/><rect x="303.0" y="176" width="6.0" height="1.4" fill="#444" opacity=".55"/><rect x="311.0" y="176" width="10.0" height="1.4" fill="#444" opacity=".55"/></g></svg></div>
 <div class="cap" style="left:215.6px;top:393px;width:174.6px;"><span style="left:4.4px;transform:scaleX(.93)">pruebas-post.php (/srv/http/sislab/core/catalogos) - gedit</span></div>
 <div class="win" id="w2" style="left:555px;top:211px;width:276px;height:179px;"><svg width="276" height="179" viewBox="0 0 276 179" style="display:block"><g id="f1"><rect x="0" y="0" width="276" height="179" fill="#f3f2f0"/><rect x="0.33" y="0.68" width="275.28" height="5.11" fill="#f7f7f6" /><rect x="91.61" y="2.64" width="75.94" height="1.20" fill="#999" opacity="0.35"/><rect x="0.33" y="5.79" width="275.28" height="6.57" fill="#d5d2cc" /><rect x="9.83" y="6.34" width="40.89" height="6.02" fill="#e4e2dd" stroke="#aaa7a0" stroke-width=".35"/><rect x="14.21" y="8.75" width="28.48" height="1.40" fill="#333" opacity="0.55"/><rect x="11.29" y="8.45" width="1.83" height="2.00" fill="#666" opacity="0.70"/><rect x="47.07" y="8.45" width="1.83" height="2.00" fill="#222" opacity="0.80"/><rect x="52.18" y="6.34" width="39.43" height="6.02" fill="#e4e2dd" stroke="#aaa7a0" stroke-width=".35"/><rect x="56.56" y="8.75" width="27.02" height="1.40" fill="#333" opacity="0.55"/><rect x="53.64" y="8.45" width="1.83" height="2.00" fill="#666" opacity="0.70"/><rect x="87.96" y="8.45" width="1.83" height="2.00" fill="#222" opacity="0.80"/><rect x="93.07" y="6.34" width="39.43" height="6.02" fill="#e4e2dd" stroke="#aaa7a0" stroke-width=".35"/><rect x="97.45" y="8.75" width="27.02" height="1.40" fill="#333" opacity="0.55"/><rect x="94.53" y="8.45" width="1.83" height="2.00" fill="#666" opacity="0.70"/><rect x="128.85" y="8.45" width="1.83" height="2.00" fill="#222" opacity="0.80"/><rect x="133.96" y="6.34" width="39.43" height="6.02" fill="#e4e2dd" stroke="#aaa7a0" stroke-width=".35"/><rect x="138.34" y="8.75" width="27.02" height="1.40" fill="#333" opacity="0.55"/><rect x="135.42" y="8.45" width="1.83" height="2.00" fill="#666" opacity="0.70"/><rect x="169.74" y="8.45" width="1.83" height="2.00" fill="#222" opacity="0.80"/><rect x="174.85" y="6.34" width="37.97" height="6.02" fill="#e4e2dd" stroke="#aaa7a0" stroke-width=".35"/><rect x="179.23" y="8.75" width="25.56" height="1.40" fill="#333" opacity="0.55"/><rect x="176.31" y="8.45" width="1.83" height="2.00" fill="#666" opacity="0.70"/><rect x="209.17" y="8.45" width="1.83" height="2.00" fill="#222" opacity="0.80"/><rect x="214.28" y="6.34" width="41.62" height="6.02" fill="#f4f3f1" stroke="#aaa7a0" stroke-width=".35"/><rect x="218.66" y="8.75" width="29.21" height="1.40" fill="#333" opacity="0.55"/><rect x="215.74" y="8.45" width="1.83" height="2.00" fill="#666" opacity="0.70"/><rect x="252.25" y="8.45" width="1.83" height="2.00" fill="#222" opacity="0.80"/><rect x="1.79" y="8.35" width="2.56" height="2.20" fill="#b04020" opacity="0.80"/><rect x="5.45" y="8.85" width="1.46" height="1.20" fill="#555" opacity="0.60"/><rect x="258.09" y="8.25" width="4.38" height="2.40" fill="#444" opacity="0.80"/><rect x="266.85" y="8.75" width="2.19" height="1.40" fill="#999" opacity="0.60"/><rect x="271.24" y="8.55" width="1.83" height="1.80" fill="#777" opacity="0.70"/><rect x="0.33" y="12.37" width="275.28" height="8.03" fill="#edecea" /><rect x="3.99" y="15.45" width="2.92" height="2.60" fill="#aaa" opacity="0.75"/><rect x="10.56" y="15.45" width="2.92" height="2.60" fill="#bbb" opacity="0.75"/><rect x="18.59" y="15.45" width="2.92" height="2.60" fill="#777" opacity="0.75"/><rect x="25.89" y="15.45" width="2.92" height="2.60" fill="#333" opacity="0.75"/><rect x="32.83" y="15.45" width="2.92" height="2.60" fill="#777" opacity="0.75"/><rect x="39.03" y="13.83" width="169.40" height="5.48" fill="#ffffff" stroke="#b8b6b0" stroke-width=".35"/><rect x="40.49" y="15.55" width="2.19" height="2.40" fill="#9ab" opacity="0.80"/><rect x="44.15" y="16.05" width="66.81" height="1.40" fill="#444" opacity="0.50"/><rect x="198.22" y="15.45" width="2.92" height="2.60" fill="#d9a441" opacity="0.90"/><rect x="202.60" y="16.05" width="2.92" height="1.40" fill="#999" opacity="0.50"/><rect x="212.09" y="15.75" width="6.57" height="2.00" fill="#4a78b8" opacity="0.70"/><rect x="223.04" y="13.83" width="51.11" height="5.48" fill="#ffffff" stroke="#b8b6b0" stroke-width=".35"/><rect x="224.50" y="15.45" width="3.65" height="2.60" fill="#3a8a3a" opacity="0.80"/><rect x="230.35" y="16.10" width="12.05" height="1.30" fill="#aaa" opacity="0.50"/><rect x="269.78" y="15.75" width="2.92" height="2.00" fill="#777" opacity="0.60"/><rect x="0.33" y="20.40" width="275.28" height="8.40" fill="#ebe9e5" /><rect x="1.79" y="23.38" width="2.92" height="2.80" fill="#a33" opacity="0.85"/><rect x="5.81" y="23.38" width="2.92" height="2.80" fill="#36a" opacity="0.85"/><rect x="10.56" y="23.38" width="2.92" height="2.80" fill="#27c" opacity="0.85"/><rect x="15.67" y="23.38" width="2.92" height="2.80" fill="#99a" opacity="0.85"/><rect x="20.05" y="23.38" width="2.92" height="2.80" fill="#669" opacity="0.85"/><rect x="24.80" y="23.38" width="2.92" height="2.80" fill="#446" opacity="0.85"/><rect x="29.54" y="23.38" width="2.92" height="2.80" fill="#c33" opacity="0.85"/><rect x="35.02" y="23.38" width="2.92" height="2.80" fill="#cb8" opacity="0.85"/><rect x="39.40" y="23.38" width="2.92" height="2.80" fill="#468" opacity="0.85"/><rect x="44.51" y="23.38" width="2.92" height="2.80" fill="#997" opacity="0.85"/><rect x="49.26" y="23.38" width="2.92" height="2.80" fill="#bbb" opacity="0.85"/><rect x="53.64" y="23.38" width="2.92" height="2.80" fill="#ccc" opacity="0.85"/><rect x="59.48" y="23.38" width="2.92" height="2.80" fill="#b33" opacity="0.85"/><rect x="63.86" y="23.38" width="2.92" height="2.80" fill="#57a" opacity="0.85"/><rect x="68.61" y="23.38" width="2.92" height="2.80" fill="#111" opacity="0.85"/><rect x="73.72" y="23.38" width="2.92" height="2.80" fill="#bbb" opacity="0.85"/><rect x="79.19" y="23.38" width="2.92" height="2.80" fill="#d8c08a" opacity="0.95"/><rect x="82.48" y="23.98" width="2.92" height="1.60" fill="#333" opacity="0.65"/><rect x="85.77" y="24.28" width="1.10" height="1.00" fill="#333" opacity="0.60"/><rect x="92.45" y="23.38" width="2.92" height="2.80" fill="#d8c08a" opacity="0.95"/><rect x="95.73" y="23.98" width="2.92" height="1.60" fill="#333" opacity="0.65"/><rect x="99.02" y="24.28" width="1.10" height="1.00" fill="#333" opacity="0.60"/><rect x="105.70" y="23.38" width="2.92" height="2.80" fill="#d8c08a" opacity="0.95"/><rect x="108.99" y="23.98" width="2.92" height="1.60" fill="#333" opacity="0.65"/><rect x="112.27" y="24.28" width="1.10" height="1.00" fill="#333" opacity="0.60"/><rect x="118.95" y="23.38" width="2.92" height="2.80" fill="#d8c08a" opacity="0.95"/><rect x="122.24" y="23.98" width="2.92" height="1.60" fill="#333" opacity="0.65"/><rect x="125.53" y="24.28" width="1.10" height="1.00" fill="#333" opacity="0.60"/><rect x="132.21" y="23.38" width="2.92" height="2.80" fill="#d8c08a" opacity="0.95"/><rect x="135.49" y="23.98" width="2.92" height="1.60" fill="#333" opacity="0.65"/><rect x="138.78" y="24.28" width="1.10" height="1.00" fill="#333" opacity="0.60"/><rect x="145.46" y="23.38" width="2.92" height="2.80" fill="#d8c08a" opacity="0.95"/><rect x="148.75" y="23.98" width="2.92" height="1.60" fill="#333" opacity="0.65"/><rect x="152.03" y="24.28" width="1.10" height="1.00" fill="#333" opacity="0.60"/><rect x="158.71" y="23.38" width="2.92" height="2.80" fill="#d8c08a" opacity="0.95"/><rect x="162.00" y="23.98" width="2.92" height="1.60" fill="#333" opacity="0.65"/><rect x="165.28" y="24.28" width="1.10" height="1.00" fill="#333" opacity="0.60"/><rect x="171.97" y="23.38" width="2.92" height="2.80" fill="#d8c08a" opacity="0.95"/><rect x="175.25" y="23.98" width="2.92" height="1.60" fill="#333" opacity="0.65"/><rect x="178.54" y="24.28" width="1.10" height="1.00" fill="#333" opacity="0.60"/><rect x="185.22" y="23.38" width="2.92" height="2.80" fill="#d8c08a" opacity="0.95"/><rect x="188.50" y="23.98" width="2.92" height="1.60" fill="#333" opacity="0.65"/><rect x="191.79" y="24.28" width="1.10" height="1.00" fill="#333" opacity="0.60"/><rect x="198.47" y="23.38" width="2.92" height="2.80" fill="#d8c08a" opacity="0.95"/><rect x="201.76" y="23.98" width="2.92" height="1.60" fill="#333" opacity="0.65"/><rect x="205.04" y="24.28" width="1.10" height="1.00" fill="#333" opacity="0.60"/><rect x="211.73" y="23.38" width="2.92" height="2.80" fill="#d8c08a" opacity="0.95"/><rect x="215.01" y="23.98" width="2.92" height="1.60" fill="#333" opacity="0.65"/><rect x="218.30" y="24.28" width="1.10" height="1.00" fill="#333" opacity="0.60"/><rect x="224.98" y="23.38" width="2.92" height="2.80" fill="#d8c08a" opacity="0.95"/><rect x="228.26" y="23.98" width="2.92" height="1.60" fill="#333" opacity="0.65"/><rect x="231.55" y="24.28" width="1.10" height="1.00" fill="#333" opacity="0.60"/><rect x="225.96" y="23.38" width="2.92" height="2.80" fill="#ddd" opacity="0.90"/><rect x="230.35" y="24.08" width="27.75" height="1.40" fill="#333" opacity="0.55"/><rect x="271.97" y="23.98" width="1.46" height="1.60" fill="#666" opacity="0.60"/><rect x="0.33" y="28.80" width="270.90" height="143.85" fill="#1d1d1d" /><rect x="271.24" y="28.80" width="4.38" height="143.85" fill="#e3e2df" /><rect x="271.78" y="29.89" width="3.29" height="30.67" fill="#7ba7de" rx="1"/><rect x="30.64" y="35.37" width="211.03" height="23.00" fill="#ffffff" /><rect x="35.02" y="49.55" width="37.24" height="1.20" fill="#333" opacity="0.55"/><rect x="30.64" y="58.37" width="211.03" height="10.22" fill="#2c2c2c" /><rect x="30.64" y="58.37" width="211.03" height="0.55" fill="#444" /><rect x="34.29" y="62.91" width="9.13" height="1.50" fill="#ddd" opacity="0.55"/><rect x="45.24" y="62.51" width="1.10" height="1.20" fill="#ccc" opacity="0.50"/><rect x="51.81" y="62.91" width="15.70" height="1.50" fill="#ddd" opacity="0.55"/><rect x="69.34" y="62.51" width="1.10" height="1.20" fill="#ccc" opacity="0.50"/><rect x="76.27" y="62.91" width="11.32" height="1.50" fill="#ddd" opacity="0.55"/><rect x="89.42" y="62.51" width="1.10" height="1.20" fill="#ccc" opacity="0.50"/><rect x="93.80" y="62.91" width="19.72" height="1.50" fill="#ddd" opacity="0.55"/><rect x="115.34" y="62.51" width="1.10" height="1.20" fill="#ccc" opacity="0.50"/><rect x="123.74" y="62.91" width="12.78" height="1.50" fill="#ddd" opacity="0.55"/><rect x="138.34" y="62.51" width="1.10" height="1.20" fill="#ccc" opacity="0.50"/><rect x="146.37" y="62.91" width="14.24" height="1.50" fill="#ddd" opacity="0.55"/><rect x="162.44" y="62.51" width="1.10" height="1.20" fill="#ccc" opacity="0.50"/><rect x="170.10" y="62.91" width="7.67" height="1.50" fill="#ddd" opacity="0.55"/><rect x="179.60" y="62.51" width="1.10" height="1.20" fill="#ccc" opacity="0.50"/><rect x="187.63" y="62.91" width="8.76" height="1.50" fill="#ddd" opacity="0.55"/><rect x="198.22" y="62.51" width="1.10" height="1.20" fill="#ccc" opacity="0.50"/><rect x="206.98" y="60.56" width="6.57" height="6.21" fill="#d4d4d4" rx=".8"/><rect x="208.80" y="62.16" width="2.92" height="3.00" fill="#555" opacity="0.80"/><rect x="216.11" y="60.56" width="6.57" height="6.21" fill="#d4d4d4" rx=".8"/><rect x="217.93" y="62.16" width="2.92" height="3.00" fill="#555" opacity="0.80"/><rect x="224.87" y="60.56" width="6.57" height="6.21" fill="#d4d4d4" rx=".8"/><rect x="226.69" y="62.16" width="2.92" height="3.00" fill="#555" opacity="0.80"/><rect x="233.27" y="60.56" width="6.57" height="6.21" fill="#d4d4d4" rx=".8"/><rect x="235.09" y="62.16" width="2.92" height="3.00" fill="#555" opacity="0.80"/><rect x="30.64" y="69.14" width="164.29" height="103.50" fill="#ffffff" /><rect x="194.93" y="69.14" width="46.73" height="103.50" fill="#ececec" /><rect x="194.75" y="69.14" width="0.37" height="103.50" fill="#dcdcdc" /><rect x="35.02" y="84.77" width="1.46" height="1.60" fill="#555" opacity="0.70"/><rect x="37.57" y="84.97" width="37.24" height="1.20" fill="#777" opacity="0.50"/><rect x="77.00" y="84.77" width="1.83" height="1.60" fill="#357" opacity="0.80"/><rect x="79.93" y="84.97" width="19.35" height="1.20" fill="#3b78b8" opacity="0.60"/><rect x="101.10" y="84.77" width="1.83" height="1.60" fill="#357" opacity="0.80"/><rect x="104.02" y="84.97" width="13.14" height="1.20" fill="#3b78b8" opacity="0.60"/><rect x="35.02" y="91.65" width="104.05" height="1.35" fill="#333" opacity="0.42"/><rect x="35.02" y="96.04" width="103.32" height="1.35" fill="#333" opacity="0.42"/><rect x="35.02" y="100.43" width="104.05" height="1.35" fill="#333" opacity="0.42"/><rect x="35.02" y="104.82" width="102.59" height="1.35" fill="#333" opacity="0.42"/><rect x="35.02" y="109.22" width="103.32" height="1.35" fill="#333" opacity="0.42"/><rect x="35.02" y="113.61" width="96.75" height="1.35" fill="#333" opacity="0.42"/><rect x="35.02" y="118.00" width="45.64" height="1.35" fill="#333" opacity="0.42"/><rect x="53.64" y="91.57" width="11.68" height="1.50" fill="#111" opacity="0.60"/><rect x="48.53" y="95.96" width="5.84" height="1.50" fill="#111" opacity="0.60"/><rect x="113.51" y="95.96" width="13.87" height="1.50" fill="#111" opacity="0.60"/><rect x="112.78" y="100.36" width="8.03" height="1.50" fill="#111" opacity="0.60"/><rect x="102.56" y="113.53" width="10.95" height="1.50" fill="#111" opacity="0.60"/><rect x="62.40" y="117.93" width="16.06" height="1.50" fill="#111" opacity="0.60"/><rect x="114.97" y="109.19" width="15.33" height="1.40" fill="#2f86d0" opacity="0.70"/><rect x="35.02" y="113.58" width="59.51" height="1.40" fill="#2f86d0" opacity="0.70"/><rect x="90.88" y="113.58" width="8.03" height="1.40" fill="#2f86d0" opacity="0.70"/><rect x="35.02" y="125.24" width="105.15" height="1.35" fill="#333" opacity="0.42"/><rect x="35.02" y="129.63" width="103.32" height="1.35" fill="#333" opacity="0.42"/><rect x="35.02" y="134.02" width="100.77" height="1.35" fill="#333" opacity="0.42"/><rect x="35.02" y="138.41" width="147.13" height="1.35" fill="#333" opacity="0.42"/><rect x="35.02" y="142.80" width="153.71" height="1.35" fill="#333" opacity="0.42"/><rect x="35.02" y="147.20" width="18.62" height="1.35" fill="#333" opacity="0.42"/><rect x="82.85" y="133.95" width="10.22" height="1.50" fill="#111" opacity="0.60"/><rect x="115.34" y="133.95" width="9.13" height="1.50" fill="#111" opacity="0.60"/><rect x="47.07" y="142.73" width="14.60" height="1.50" fill="#111" opacity="0.60"/><rect x="35.02" y="147.12" width="9.86" height="1.50" fill="#111" opacity="0.60"/><rect x="35.02" y="155.54" width="154.44" height="1.35" fill="#333" opacity="0.42"/><rect x="35.02" y="159.93" width="17.52" height="1.35" fill="#333" opacity="0.42"/><path d="M166.10,92.10 C164.03,97.42 162.37,101.10 159.89,106.01 L145.40,133.00 C150.78,130.14 155.75,127.68 160.72,126.46 C160.30,121.55 162.37,115.82 166.10,115.82 C169.83,115.82 171.90,121.55 171.48,126.46 C176.45,127.68 181.42,130.14 186.80,133.00 L172.31,106.01 C169.83,101.10 168.17,97.42 166.10,92.10 Z" fill="#2897c8"/><rect x="149.00" y="118.20" width="35" height=".7" fill="#2a6a90" opacity=".35"/><rect x="0.33" y="172.64" width="275.28" height="6.57" fill="#edecea" /><rect x="0.33" y="172.64" width="275.28" height="0.29" fill="#c0beb8" /><rect x="1.79" y="174.93" width="2.19" height="2.00" fill="#333" opacity="0.80"/><rect x="204.06" y="174.63" width="3.29" height="2.60" fill="#6a8" opacity="0.80"/><rect x="210.45" y="174.63" width="3.29" height="2.60" fill="#999" opacity="0.80"/><rect x="216.84" y="174.63" width="3.29" height="2.60" fill="#c93" opacity="0.80"/><rect x="223.23" y="174.63" width="3.29" height="2.60" fill="#c33" opacity="0.80"/><rect x="229.61" y="174.63" width="3.29" height="2.60" fill="#888" opacity="0.80"/><rect x="236.00" y="174.63" width="3.29" height="2.60" fill="#36c" opacity="0.80"/><rect x="242.39" y="174.63" width="3.29" height="2.60" fill="#c33" opacity="0.80"/><rect x="248.78" y="174.63" width="3.29" height="2.60" fill="#777" opacity="0.80"/><rect x="255.17" y="174.63" width="3.29" height="2.60" fill="#47b" opacity="0.80"/><rect x="261.56" y="174.63" width="3.29" height="2.60" fill="#999" opacity="0.80"/><rect x="267.95" y="174.63" width="3.29" height="2.60" fill="#555" opacity="0.80"/></g></svg><span class="wt" style="left:35.0px;top:38.3px;font-size:8.6px;line-height:10px;color:#222;transform:scaleX(.842)">Gespadas</span><span class="wt" style="left:35.0px;top:74.3px;font-size:7.3px;line-height:9px;color:#1b1b1b;transform:scaleX(.833)">Instalar GNOME 3 en ArchLinux</span><span class="wt" style="left:148.6px;top:108.1px;font-size:8px;line-height:10px;color:#26323e;transform:scaleX(.959)">GNOME 3</span></div>
 <div class="cap" style="left:601.8px;top:393px;width:182px;"><span style="left:5px;transform:scaleX(.885)">Instalar GNOME 3 en ArchLinux | Gespadas - Mozilla Firefox</span></div>
</div>
</body>
</html>
